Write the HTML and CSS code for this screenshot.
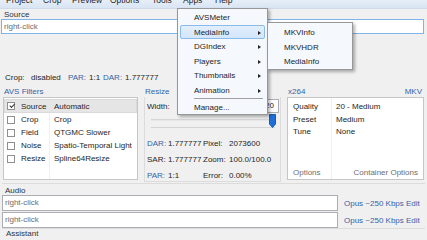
FILE: index.html
```html
<!DOCTYPE html>
<html lang="en">
<head>
  <meta charset="UTF-8" />
  <title>StaxRip</title>
  <link rel="stylesheet" href="styles.css">
</head>
<body>
  <div class="window">
    <div class="menubar">
      <div class="menubar-items">
        <span class="m-project">Project</span>
        <span class="m-crop">Crop</span>
        <span class="m-preview">Preview</span>
        <span class="m-options">Options</span>
        <span class="m-tools">Tools</span>
        <span class="m-apps">Apps</span>
        <span>Help</span>
      </div>
    </div>

    <div class="source">
      <div class="group-title dark">Source</div>
      <div class="textbox">right-click</div>
    </div>

    <div class="crop-line">
      <span class="w-crop">Crop:</span><span class="w-dis">disabled</span><span class="blue w-par">PAR:</span><span class="w-par-v">1:1</span><span class="blue w-dar">DAR:</span><span>1.777777</span>
    </div>

    <div class="panels">
      <div class="panel filters">
        <div class="panel-head blue">AVS Filters</div>
        <div class="panel-box list">
          <div class="col-line"></div>
          <div class="row selected"><span class="check on"></span><span class="c1">Source</span><span>Automatic</span></div>
          <div class="row"><span class="check"></span><span class="c1">Crop</span><span>Crop</span></div>
          <div class="row"><span class="check"></span><span class="c1">Field</span><span>QTGMC Slower</span></div>
          <div class="row"><span class="check"></span><span class="c1">Noise</span><span>Spatio-Temporal Light</span></div>
          <div class="row"><span class="check"></span><span class="c1">Resize</span><span>Spline64Resize</span></div>
        </div>
      </div>

      <div class="panel resize">
        <div class="panel-head blue">Resize</div>
        <div class="resize-body">
          <div class="width-row">
            <span>Width:</span>
            <div class="num-box">1920</div>
          </div>
          <div class="slider">
            <div class="track"></div>
            <div class="ticks"></div>
            <svg class="thumb" width="7" height="14" viewBox="0 0 7 14">
              <path d="M0.5 0.5 H6.5 V10 L3.5 13.5 L0.5 10 Z" fill="#1f6fd6" stroke="#1a5bb0" stroke-width="1"/>
            </svg>
          </div>
          <div class="stats">
            <span class="blue">DAR:</span><span>1.777777</span><span>Pixel:</span><span>2073600</span>
            <span>SAR:</span><span>1.777777</span><span>Zoom:</span><span>100.0/100.0</span>
            <span class="blue">PAR:</span><span>1:1</span><span>Error:</span><span>0.00%</span>
          </div>
        </div>
      </div>

      <div class="panel encoder">
        <div class="panel-head blue"><span>x264</span><span>MKV</span></div>
        <div class="panel-box enc-box">
          <div class="col-line enc-line"></div>
          <div class="enc-row"><span class="c1">Quality</span><span>20 - Medium</span></div>
          <div class="enc-row"><span class="c1">Preset</span><span>Medium</span></div>
          <div class="enc-row"><span class="c1">Tune</span><span>None</span></div>
          <div class="enc-foot"><span>Options</span><span>Container Options</span></div>
        </div>
      </div>
    </div>

    <div class="audio">
      <div class="group-title dark">Audio</div>
      <div class="audio-row">
        <div class="textbox">right-click</div>
        <span class="blue codec">Opus ~250 Kbps</span><span class="blue">Edit</span>
      </div>
      <div class="audio-row">
        <div class="textbox">right-click</div>
        <span class="blue codec">Opus ~250 Kbps</span><span class="blue">Edit</span>
      </div>
    </div>

    <div class="assistant group-title dark">Assistant</div>

    <div class="dropdown apps-menu">
      <div class="item">AVSMeter</div>
      <div class="item active">MediaInfo<span class="arrow"></span></div>
      <div class="item">DGIndex<span class="arrow"></span></div>
      <div class="item">Players<span class="arrow"></span></div>
      <div class="item">Thumbnails<span class="arrow"></span></div>
      <div class="item">Animation<span class="arrow"></span></div>
      <div class="sep"></div>
      <div class="item">Manage...</div>
    </div>

    <div class="dropdown submenu">
      <div class="item">MKVInfo</div>
      <div class="item">MKVHDR</div>
      <div class="item">MediaInfo</div>
    </div>
  </div>
</body>
</html>
```

FILE: styles.css
```css
* {
  box-sizing: border-box;
}

body {
  margin: 0;
  padding: 0;
  font-family: 'Liberation Sans', Arial, sans-serif;
  font-size: 8px;
  color: #1e1e1e;
  background-color: #f0f0f0;
  white-space: nowrap;
}

.window {
  position: relative;
  width: 427px;
  height: 240px;
  overflow: hidden;
  background-color: #f0f0f0;
}

.blue {
  color: #3563a6;
}

.dark {
  color: #2b3440;
}

/* menu bar, only its lower half is in view */
.menubar {
  height: 9px;
  overflow: hidden;
  background: linear-gradient(#e6eef8, #d9e5f3);
  border-bottom: 1px solid #cfdbea;
}

.menubar-items {
  display: flex;
  margin-top: -6px;
  padding-left: 6px;
  line-height: 12px;
  font-size: 8.5px;
}

.m-project { width: 37px; }
.m-crop { width: 29px; }
.m-preview { width: 38px; }
.m-options { width: 42px; }
.m-tools { width: 31px; }
.m-apps { width: 32px; }

.group-title {
  height: 9px;
  line-height: 9px;
  padding-left: 3px;
}

.source {
  padding: 1px 3px 0 1px;
  height: 63px;
}

.textbox {
  height: 15px;
  line-height: 13px;
  padding-left: 2px;
  background-color: #fff;
  border: 1px solid #abadb3;
  color: #6d6d6d;
}

.source .textbox {
  border-color: #7eb4ea;
}

.crop-line {
  height: 15px;
  line-height: 12px;
  padding-left: 5px;
  display: flex;
}

.w-crop { width: 26px; }
.w-dis { width: 37px; }
.w-par { width: 21px; }
.w-par-v { width: 14px; }
.w-dar { width: 22px; }

.panels {
  display: flex;
  gap: 6px;
  padding: 0 3px;
  height: 93px;
}

.panel {
  display: flex;
  flex-direction: column;
}

.filters {
  width: 135px;
}

.resize {
  width: 137px;
}

.encoder {
  flex: 1;
}

.panel-head {
  height: 10px;
  line-height: 10px;
  display: flex;
  justify-content: space-between;
  padding: 0 2px 0 1px;
}

.panel-box {
  position: relative;
  flex: 1;
  background-color: #fff;
  border: 1px solid #c6c6c6;
}

.col-line {
  position: absolute;
  top: 0;
  bottom: 0;
  left: 45px;
  width: 1px;
  background-color: #f0f0f0;
}

.list {
  padding-top: 1px;
}

.row {
  position: relative;
  display: flex;
  align-items: center;
  height: 13px;
  padding-left: 3px;
}

.row.selected {
  height: 14px;
  background-color: #e5e5e5;
  border: 1px solid #dadada;
  padding-left: 2px;
}

.check {
  width: 8px;
  height: 8px;
  border: 1px solid #8e8f8f;
  background-color: #fff;
  margin-right: 6px;
  position: relative;
}

.check.on::after {
  content: '';
  position: absolute;
  left: 1px;
  top: 0;
  width: 4px;
  height: 2px;
  border-left: 1px solid #333;
  border-bottom: 1px solid #333;
  transform: rotate(-45deg) translate(0, 1px);
}

.row .c1 {
  width: 33px;
}

.resize-body {
  flex: 1;
  border: 1px solid #dcdcdc;
  border-top: none;
  padding: 2px 0 0 2px;
}

.width-row {
  display: flex;
  justify-content: space-between;
  align-items: center;
  height: 14px;
  padding-right: 1px;
}

.num-box {
  width: 40px;
  height: 14px;
  line-height: 12px;
  text-align: right;
  padding-right: 4px;
  background-color: #fff;
  border: 1px solid #abadb3;
}

.slider {
  position: relative;
  height: 20px;
}

.track {
  position: absolute;
  left: 4px;
  right: 5px;
  top: 6px;
  height: 2px;
  border-top: 1px solid #d6d6d6;
  border-bottom: 1px solid #e7e7e7;
}

.ticks {
  position: absolute;
  left: 4px;
  right: 5px;
  top: 14px;
  height: 1px;
  background-color: #d4d4d4;
}

.thumb {
  position: absolute;
  right: 4px;
  top: 1px;
}

.stats {
  display: grid;
  grid-template-columns: 21px 35px 26px auto;
  row-gap: 5px;
  line-height: 11px;
  margin-top: 5px;
}

.enc-box {
  padding-top: 3px;
}

.enc-line {
  left: 43px;
}

.enc-row {
  display: flex;
  height: 12.5px;
  line-height: 12px;
  padding-left: 5px;
}

.enc-row .c1 {
  width: 43px;
}

.enc-foot {
  position: absolute;
  left: 5px;
  right: 5px;
  bottom: 2px;
  display: flex;
  justify-content: space-between;
  color: #6e6e6e;
}

.audio {
  margin: 3px 2px 0 2px;
  height: 46px;
  border-top: 1px solid #dcdcdc;
  border-bottom: 1px solid #dcdcdc;
  padding-top: 2px;
}

.audio .group-title {
  padding-left: 3px;
}

.audio-row {
  display: flex;
  align-items: center;
  margin-bottom: 1px;
}

.audio-row .textbox {
  width: 336px;
  height: 16px;
  line-height: 14px;
  margin-right: 6px;
}

.codec {
  width: 62px;
}

.assistant {
  padding-left: 6px;
  padding-top: 0;
}

/* drop-down menus */
.dropdown {
  position: absolute;
  background-color: #f5f8fc;
  border: 1px solid #979797;
  box-shadow: 2px 2px 3px rgba(0, 0, 0, 0.3);
  padding: 1px 2px;
}

.apps-menu {
  left: 177px;
  top: 8px;
  width: 91px;
  height: 107px;
}

.submenu {
  left: 267px;
  top: 22px;
  width: 86px;
  height: 48px;
  padding-top: 2px;
}

.item {
  position: relative;
  height: 14.5px;
  line-height: 13px;
  padding-left: 13px;
  border: 1px solid transparent;
}

.item.active {
  background: linear-gradient(#e2eefc, #d3e6fb);
  border-color: #8bbbe9;
  border-radius: 2px;
}

.arrow {
  position: absolute;
  right: 3px;
  top: 5px;
  border-left: 3px solid #222;
  border-top: 2px solid transparent;
  border-bottom: 2px solid transparent;
}

.sep {
  height: 1px;
  margin: 1px 2px 1px 14px;
  background-color: #a0a0a0;
}
```
